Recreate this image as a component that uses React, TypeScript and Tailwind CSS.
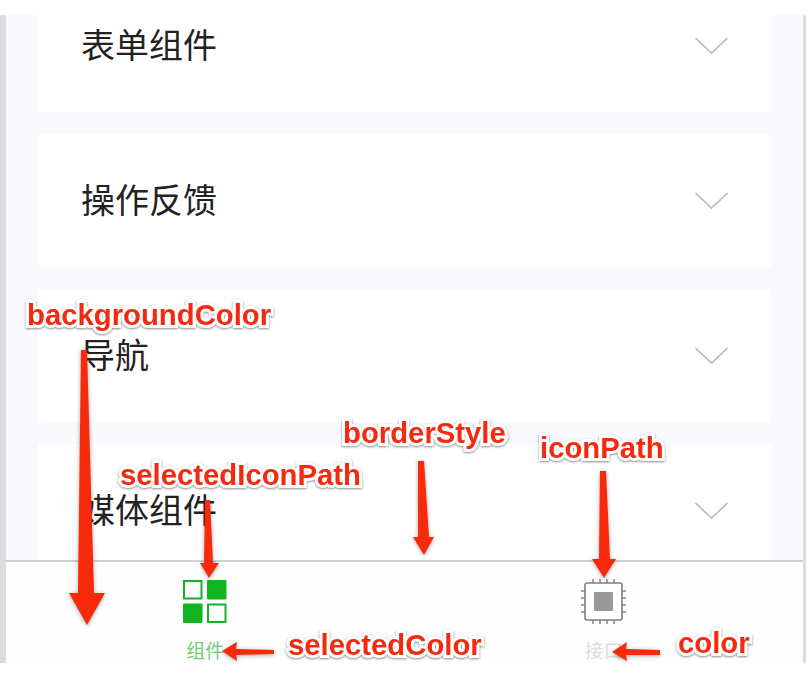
const sections = ["表单组件", "操作反馈", "导航", "媒体组件"]

function Chevron() {
  return (
    <svg width="33" height="20" viewBox="0 0 33 20" fill="none" className="shrink-0">
      <path d="M0.5 2 L16.5 17 L32.5 2" stroke="#bdbdbf" strokeWidth="1.7" />
    </svg>
  )
}

function SectionCard({ title }: { title: string }) {
  return (
    <div className="h-[133px] shrink-0 bg-white flex items-center justify-between pl-[43px] pr-[43px]">
      <span className="-mt-[3px] text-[34px] leading-none text-[#222222]">{title}</span>
      <Chevron />
    </div>
  )
}

function GridIcon() {
  return (
    <svg width="44" height="44" viewBox="0 0 44 44" fill="none">
      <rect x="1" y="1" width="17.5" height="17.5" stroke="#12b320" strokeWidth="2" />
      <rect x="24" y="0" width="19.5" height="19.5" rx="1" fill="#12b320" />
      <rect x="0" y="23.5" width="19.5" height="19.5" rx="1" fill="#12b320" />
      <rect x="25" y="24.5" width="17.5" height="17.5" stroke="#12b320" strokeWidth="2" />
    </svg>
  )
}

function ChipIcon() {
  const ticks = [9, 16, 23, 30]
  return (
    <svg width="46" height="46" viewBox="0 0 46 46" fill="none">
      <rect x="4" y="4" width="37" height="37" rx="2" fill="white" stroke="#7d7f82" strokeWidth="1.6" />
      <rect x="13" y="13" width="19" height="19" rx="1" fill="#999999" />
      {ticks.map((t) => (
        <g key={t} stroke="#7d7f82" strokeWidth="1.4">
          <path d={`M${t + 3} 0 V4`} />
          <path d={`M${t + 3} 41 V45`} />
          <path d={`M0 ${t + 3} H4`} />
          <path d={`M41 ${t + 3} H45`} />
        </g>
      ))}
    </svg>
  )
}

function Annotation({ text, className }: { text: string; className: string }) {
  return (
    <span
      className={`absolute font-bold text-[#f5290f] text-[29.3px] leading-none whitespace-nowrap [-webkit-text-stroke:6px_#ffffff] [paint-order:stroke_fill] drop-shadow-[0_1px_1px_rgba(0,0,0,0.45)] font-['Liberation_Sans',sans-serif] ${className}`}
    >
      {text}
    </span>
  )
}

export default function App() {
  return (
    <div className="relative w-[806px] h-[693px] bg-white overflow-hidden font-['Noto_Sans_CJK_SC',sans-serif]">
      <div className="mt-[15px] h-[648px] border-l-[6px] border-r-[3px] border-[#dcdcdc] flex flex-col bg-[#faf9fd]">
        <div className="flex-1 min-h-0 overflow-hidden px-[32px]">
          <div className="-mt-[36px] flex flex-col gap-[22px]">
            {sections.map((s) => (
              <SectionCard key={s} title={s} />
            ))}
          </div>
        </div>
        <div className="h-[103px] shrink-0 border-t-2 border-[#cfcfd1] bg-[#fefefe] flex">
          <div className="flex-1 flex flex-col items-center pt-[18px] overflow-hidden">
            <GridIcon />
            <span className="mt-[16px] text-[19px] leading-none text-[#72cc72]">组件</span>
          </div>
          <div className="flex-1 flex flex-col items-center pt-[17px] overflow-hidden">
            <ChipIcon />
            <span className="mt-[15px] text-[19px] leading-none text-[#dddddd]">接口</span>
          </div>
        </div>
      </div>

      {/* red callouts drawn on top of the screenshot */}
      <svg width="806" height="693" viewBox="0 0 806 693" className="absolute inset-0 drop-shadow-[0_1px_2px_rgba(0,0,0,0.35)]">
        <g fill="#f72a0c">
          <polygon points="81,350 87,350 94,593 105,593 87,625 69,593 78,593" />
          <polygon points="205,500 210,500 213,563 219,563 209,578 200,563 204,563" />
          <polygon points="418,461 424,461 429,537 434,537 424,555 413,537 418,537" />
          <polygon points="600,471 606,471 610,559 616,559 604,578 592,559 599,559" />
          <polygon points="222,651 237,642 236,649 274,650 274,654 236,655 237,661" />
          <polygon points="612,652 627,642 626,649 660,650 660,655 626,655 627,661" />
        </g>
      </svg>
      <Annotation text="backgroundColor" className="left-[27px] top-[300px]" />
      <Annotation text="selectedIconPath" className="left-[120px] top-[460px]" />
      <Annotation text="borderStyle" className="left-[343px] top-[418px]" />
      <Annotation text="iconPath" className="left-[540px] top-[433px]" />
      <Annotation text="selectedColor" className="left-[288px] top-[630px]" />
      <Annotation text="color" className="left-[678px] top-[628px]" />
    </div>
  )
}
